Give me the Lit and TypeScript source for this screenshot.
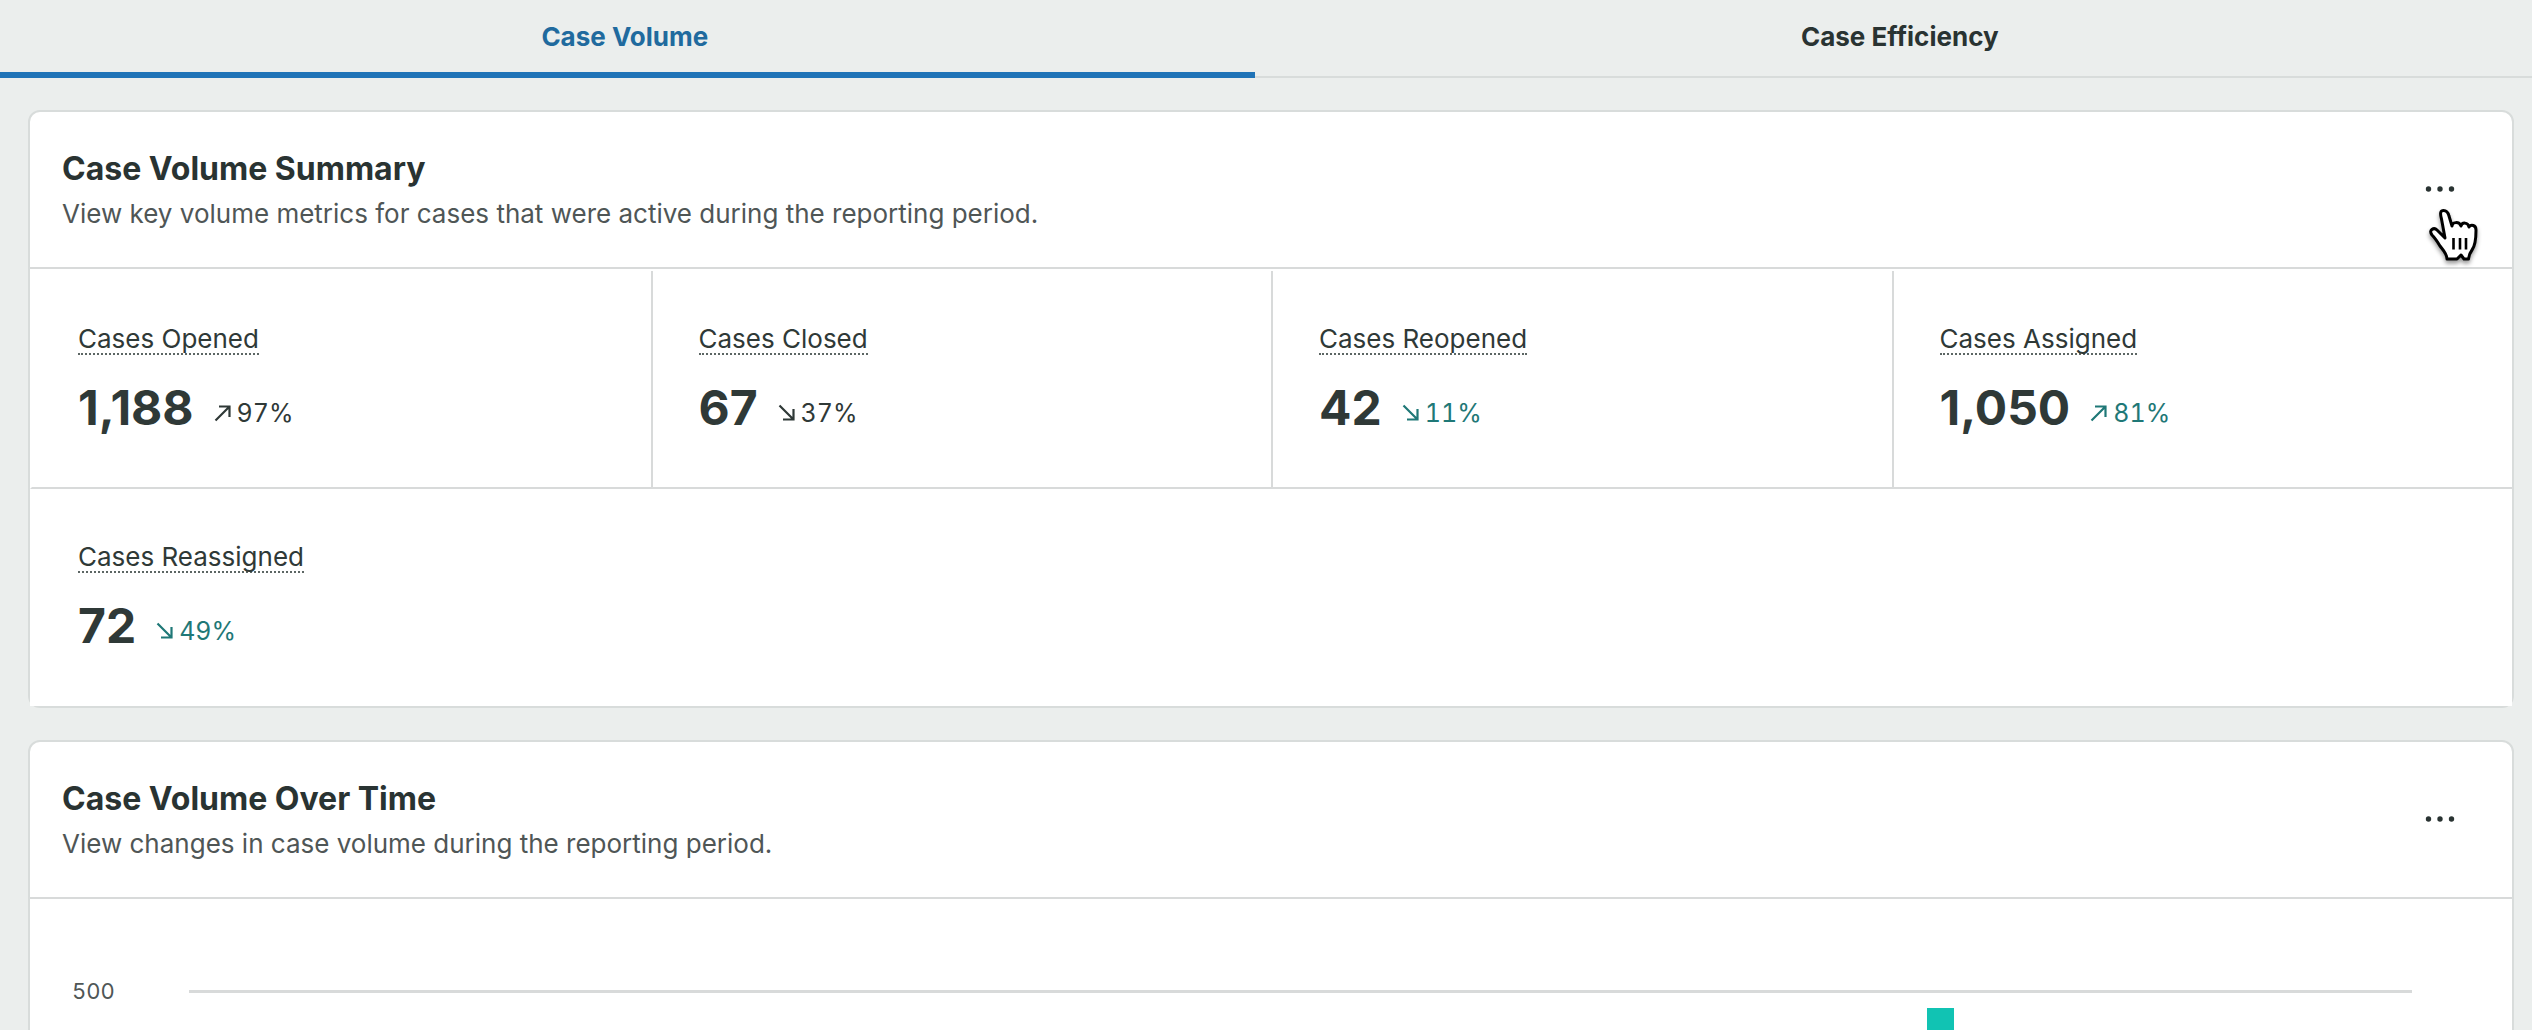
import { LitElement, html, css, svg } from "lit";
import { customElement, property } from "lit/decorators.js";
import { classMap } from "lit/directives/class-map.js";

interface Metric {
  label: string;
  value: string;
  change: string;
  direction: "up" | "down";
  neutral?: boolean;
}

const METRICS: Metric[] = [
  { label: "Cases Opened", value: "1,188", change: "97%", direction: "up", neutral: true },
  { label: "Cases Closed", value: "67", change: "37%", direction: "down", neutral: true },
  { label: "Cases Reopened", value: "42", change: "11%", direction: "down" },
  { label: "Cases Assigned", value: "1,050", change: "81%", direction: "up" },
  { label: "Cases Reassigned", value: "72", change: "49%", direction: "down" },
];

@customElement("report-card")
export class ReportCard extends LitElement {
  @property() heading = "";
  @property() description = "";

  static styles = css`
    :host {
      display: block;
      box-sizing: border-box;
      border: 2px solid #d8dcdb;
      border-radius: 12px;
      background: #fff;
    }
    .header {
      display: flex;
      align-items: center;
      justify-content: space-between;
      padding: 32px 48px 33px 32px;
      border-bottom: 2px solid #d8dada;
    }
    .title {
      margin: 0;
      font-size: 32px;
      line-height: 50px;
      font-weight: 700;
      color: #293332;
    }
    .description {
      margin: 0;
      font-size: 26px;
      line-height: 40px;
      color: #4f5656;
    }
    .menu {
      display: flex;
      align-items: center;
      justify-content: center;
      width: 48px;
      height: 48px;
      padding: 0;
      border: 0;
      border-radius: 8px;
      background: none;
      color: #293332;
      cursor: pointer;
    }
  `;

  render() {
    return html`
      <header class="header">
        <div>
          <h2 class="title">${this.heading}</h2>
          <p class="description">${this.description}</p>
        </div>
        <button class="menu" type="button" aria-label="More options">
          <svg width="32" height="8" viewBox="0 0 32 8" fill="currentColor" aria-hidden="true">
            <circle cx="4.5" cy="4" r="2.7" />
            <circle cx="16" cy="4" r="2.7" />
            <circle cx="27.5" cy="4" r="2.7" />
          </svg>
        </button>
      </header>
      <slot></slot>
    `;
  }
}

@customElement("metric-tile")
export class MetricTile extends LitElement {
  @property({ attribute: false }) metric!: Metric;

  static styles = css`
    :host {
      display: block;
    }
    .label {
      width: fit-content;
      border-bottom: 2px dotted #5c6664;
      font-size: 26px;
      line-height: 28px;
      color: #2f3937;
    }
    .reading {
      display: flex;
      align-items: flex-end;
      gap: 20px;
      margin-top: 23px;
      color: #2f3937;
    }
    .value {
      font-size: 48px;
      line-height: 60px;
      font-weight: 700;
    }
    .change {
      display: flex;
      align-items: baseline;
      gap: 6px;
      padding-bottom: 9px;
      font-size: 25px;
      line-height: 32px;
      font-variant-numeric: tabular-nums;
      color: #1f7877;
    }
    .neutral {
      color: #2f3937;
    }
  `;

  render() {
    const { label, value, change, direction, neutral } = this.metric;
    const arrow =
      direction === "up"
        ? svg`<path d="M1.5 16.5 15 3M5 2.5H15.5V13" />`
        : svg`<path d="M1.5 1.5 15 15M5 15.5H15.5V5" />`;
    return html`
      <div class="label">${label}</div>
      <div class="reading">
        <span class="value">${value}</span>
        <span class=${classMap({ change: true, neutral: !!neutral })}>
          <svg width="17" height="18" viewBox="0 0 17 18" fill="none" stroke="currentColor" stroke-width="2.2" aria-hidden="true">
            ${arrow}
          </svg>
          <span>${change}</span>
        </span>
      </div>
    `;
  }
}

@customElement("app-root")
export class AppRoot extends LitElement {
  static styles = css`
    :host {
      display: block;
      position: relative;
      box-sizing: border-box;
      height: 100vh;
      overflow: hidden;
      background: #ebeeed;
      font-family: Inter, "Liberation Sans", sans-serif;
    }
    .tabs {
      display: flex;
      margin: 0 -13px 0 -5px;
    }
    .tab {
      flex: 1 1 auto;
      box-sizing: border-box;
      height: 78px;
      padding: 2px 0 4px;
      border: 0;
      border-bottom: 2px solid #d8dcdb;
      background: none;
      font: 700 26px/32px Inter, "Liberation Sans", sans-serif;
      color: #293332;
      cursor: pointer;
    }
    .selected {
      padding: 2px 0 0;
      border-bottom: 6px solid #1f73b7;
      color: #206a9e;
    }
    .cards {
      display: flex;
      flex-direction: column;
      gap: 32px;
      padding: 32px 18px 32px 28px;
    }
    .metrics {
      display: grid;
      grid-template-columns: repeat(4, 1fr);
      padding-top: 2px;
      background: #fff;
    }
    .cell {
      padding: 54px 46px 49px;
      border-left: 2px solid #d8dada;
      border-bottom: 2px solid #d8dada;
    }
    .first {
      border-left-color: transparent;
    }
    .full {
      grid-column: 1 / -1;
      border-bottom: 1px solid #fff;
    }
    .chart {
      padding: 75px 100px 40px 42px;
    }
    .gridrow {
      display: flex;
      align-items: center;
      gap: 24px;
    }
    .tick {
      width: 93px;
      font-size: 22px;
      line-height: 34px;
      font-variant-numeric: tabular-nums;
      color: #4f5656;
    }
    .gridline {
      flex: 1;
      height: 3px;
      background: #d8dada;
    }
    .plot {
      height: 340px;
      margin-left: 117px;
    }
    .bar {
      width: 27px;
      height: 340px;
      margin-left: 78.2%;
      background: #11c3b3;
    }
    .pointer {
      position: absolute;
      top: 206px;
      right: 52px;
      filter: drop-shadow(0 3px 2px rgba(0, 0, 0, 0.4));
      pointer-events: none;
    }
  `;

  render() {
    return html`
      <div class="tabs" role="tablist">
        <button class="tab selected" type="button" role="tab" aria-selected="true">Case Volume</button>
        <button class="tab" type="button" role="tab" aria-selected="false">Case Efficiency</button>
      </div>
      <main class="cards">
        <report-card
          heading="Case Volume Summary"
          description="View key volume metrics for cases that were active during the reporting period."
        >
          <div class="metrics">
            ${METRICS.map(
              (metric, i) => html`
                <metric-tile
                  class=${classMap({ cell: true, first: i % 4 === 0, full: i === 4 })}
                  .metric=${metric}
                ></metric-tile>
              `
            )}
          </div>
        </report-card>
        <report-card
          heading="Case Volume Over Time"
          description="View changes in case volume during the reporting period."
        >
          <div class="chart">
            <div class="gridrow">
              <span class="tick">500</span>
              <span class="gridline"></span>
            </div>
            <div class="plot"><div class="bar"></div></div>
          </div>
        </report-card>
      </main>
      <svg class="pointer" width="54" height="60" viewBox="0 0 54 60" aria-hidden="true">
        <path
          d="M19 32 L15.5 13 C13.5 6 15 4.500 17.500 4.500 C20 4.500 22 6 23 10 L26 20 C26 16 33 15 35 20 C36 16 42 16 43 21 C45 18 50 19 50 24 C50 34 49 40 46 44 C43 48 43 49 42.500 53 L38 53 L35 49 L31 53 L21 53 C21 48 18 45 14 40 C11 35 9 32 6 29 C2 24 8 21 11 24 Z"
          fill="#fff"
          stroke="#000"
          stroke-width="3"
          stroke-linejoin="round"
        />
        <path d="M27.500 32V43.500M34 32V43.500M40 32V43.500" stroke="#000" stroke-width="2.600" fill="none" />
      </svg>
    `;
  }
}
